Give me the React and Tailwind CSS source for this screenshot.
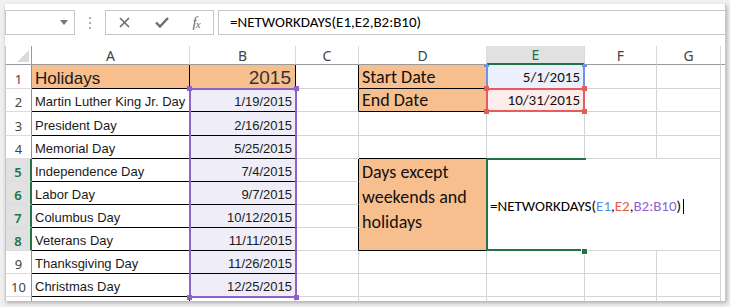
const arial = "font-['Liberation_Sans',Arial,sans-serif]"
const calibri = "font-['Carlito','Lato',sans-serif]"
const segoe = "font-['Segoe_UI','Noto_Sans',sans-serif]"

const holidays = [
  ['Martin Luther King Jr. Day', '1/19/2015'],
  ['President Day', '2/16/2015'],
  ['Memorial Day', '5/25/2015'],
  ['Independence Day', '7/4/2015'],
  ['Labor Day', '9/7/2015'],
  ['Columbus Day', '10/12/2015'],
  ['Veterans Day', '11/11/2015'],
  ['Thanksgiving Day', '11/26/2015'],
  ['Christmas Day', '12/25/2015'],
]

function Cell({ r = 'border-r-[#d4d4d4]', b = 'border-b-[#d4d4d4]', wrap = false, className = '', children }) {
  return (
    <div className={`border-r border-b ${r} ${b} ${wrap ? 'whitespace-normal' : 'whitespace-nowrap'} ${className}`}>
      {children}
    </div>
  )
}

function RowHead({ n, active }) {
  return (
    <div
      className={`flex items-end justify-center pb-px leading-[15px] border-l border-l-[#c6c6c6] border-b border-b-[#dcdcdc] text-[13px] ${segoe} ${
        active
          ? 'border-r-2 border-r-[#217346] bg-[#e1e1e1] text-[#217346] font-semibold'
          : 'border-r border-r-[#8f8f8f] text-[#444]'
      }`}
    >
      {n}
    </div>
  )
}

function ColHead({ label, active }) {
  return (
    <div
      className={`flex items-center justify-center text-[14px] ${segoe} border-r border-r-[#dadada] ${
        active
          ? 'bg-[#e1e1e1] text-[#217346] border-b-2 border-b-[#217346]'
          : 'text-[#444] border-b border-b-[#9b9b9b]'
      }`}
    >
      {label}
    </div>
  )
}

function Corner({ className }) {
  return <div className={`absolute w-[5px] h-[5px] ${className}`} />
}

function Blank({ r, b }) {
  return <Cell r={r} b={b} />
}

function Filler() {
  return <div />
}

export default function App() {
  const body = []

  // row 1
  body.push(
    <RowHead key="h1" n={1} />,
    <Cell key="a1" r="border-r-black" b="border-b-black" className={`bg-[#f8bf8e] flex items-end pl-[3px] leading-[18px] text-[17px] text-[#1a1a1a] ${arial}`}>
      Holidays
    </Cell>,
    <Cell key="b1" r="border-r-black" b="border-b-black" className={`bg-[#f8bf8e] flex items-end justify-end pr-[4px] pb-px leading-[19px] text-[19px] text-[#333] ${arial}`}>
      2015
    </Cell>,
    <Blank key="c1" r="border-r-black" />,
    <Cell key="d1" r="border-r-black" b="border-b-black" className={`bg-[#f8bf8e] flex items-end pl-[3px] pb-px leading-[20px] text-[18px] text-[#111] ${calibri}`}>
      Start Date
    </Cell>,
    <div key="e1" className={`relative bg-[#ebf0fc] border-r border-b border-[#d4d4d4] flex items-end justify-end pr-[4px] pb-[2px] leading-[18px] text-[15px] text-[#111] ${calibri}`}>
      5/1/2015
      <div className="absolute -left-px -top-px -right-px -bottom-px border-x-2 border-[#6b93e8]" />
      <div className="absolute -left-[3px] top-0 w-[5px] h-[2px] bg-[#6b93e8]" />
      <div className="absolute -right-[3px] top-0 w-[5px] h-[2px] bg-[#6b93e8]" />
    </div>,
    <Blank key="f1" />,
    <Blank key="g1" />,
    <Filler key="x1" />
  )

  holidays.forEach(([name], i) => {
    const row = i + 2
    const active = row >= 5 && row <= 8
    body.push(<RowHead key={`h${row}`} n={row} active={active} />)
    body.push(
      <Cell key={`a${row}`} r="border-r-black" b="border-b-black" className={`flex items-end pl-[3px] pb-[2px] leading-[15px] text-[13px] text-[#1a1a1a] ${arial}`}>
        {name}
      </Cell>
    )
    if (row === 2) {
      body.push(
        <div key="bblock" className="row-span-9 grid grid-rows-subgrid relative bg-[#efedf8]">
          {holidays.map(([, d]) => (
            <Cell key={d} r="border-r-black" b="border-b-black" className={`flex items-end justify-end pr-[3px] pb-[2px] leading-[15px] text-[13px] text-[#1a1a1a] ${arial}`}>
              {d}
            </Cell>
          ))}
          <div className="absolute -left-px -top-px -right-px -bottom-px border-2 border-[#8d62c9]" />
          <Corner className="-left-[3px] -top-[3px] bg-[#8d62c9]" />
          <Corner className="-right-[3px] -top-[3px] bg-[#8d62c9]" />
          <Corner className="-left-[3px] -bottom-[3px] bg-[#8d62c9]" />
          <Corner className="-right-[3px] -bottom-[3px] bg-[#8d62c9]" />
        </div>
      )
    }
    const cBlack = row === 2 || active
    body.push(<Blank key={`c${row}`} r={cBlack ? 'border-r-black' : undefined} />)

    if (row === 2) {
      body.push(
        <Cell key="d2" r="border-r-black" b="border-b-black" className={`bg-[#f8bf8e] flex items-end pl-[3px] pb-px leading-[20px] text-[18px] text-[#111] ${calibri}`}>
          End Date
        </Cell>,
        <div key="e2" className={`relative bg-[#fcecec] border-r border-b border-[#d4d4d4] flex items-end justify-end pr-[4px] pb-[2px] leading-[18px] text-[15px] text-[#111] ${calibri}`}>
          10/31/2015
          <div className="absolute -left-px -top-px -right-px -bottom-px border-2 border-[#e35d5d]" />
          <Corner className="-left-[3px] -top-[3px] bg-[#e35d5d]" />
          <Corner className="-right-[3px] -top-[3px] bg-[#e35d5d]" />
          <Corner className="-left-[3px] -bottom-[3px] bg-[#e35d5d]" />
          <Corner className="-right-[3px] -bottom-[3px] bg-[#e35d5d]" />
        </div>,
        <Blank key="f2" />,
        <Blank key="g2" />
      )
    } else if (row === 5) {
      body.push(
        <Cell key="d5" wrap r="border-r-black" b="border-b-black" className={`row-span-4 bg-[#f8bf8e] pl-[3px] pt-[1px] leading-[25px] text-[18px] text-[#111] ${calibri}`}>
          Days except weekends and holidays
        </Cell>,
        <div key="e5" className="col-span-3 row-span-4 relative bg-white border-r border-b border-[#d4d4d4] flex items-center pl-[3px] pt-[3px]">
          <span className={`${calibri} text-[15px] text-black whitespace-nowrap`}>
            =NETWORKDAYS(<span className="text-[#5b8ee6]">E1</span>,<span className="text-[#e8584f]">E2</span>,
            <span className="text-[#9063cd]">B2:B10</span>)
          </span>
          <span className="ml-[2px] w-px h-[15px] bg-black" />
          <div className="absolute -left-px -top-px w-[100px] -bottom-px border-t-2 border-l-2 border-b-2 border-[#217346]" />
          <div className="absolute left-[95px] top-[90px] w-[5px] h-[5px] bg-[#217346] ring-1 ring-white" />
        </div>
      )
    } else if (!active) {
      body.push(
        <Blank key={`d${row}`} b={row === 4 ? 'border-b-black' : undefined} />,
        <Blank key={`e${row}`} />,
        <Blank key={`f${row}`} />,
        <Blank key={`g${row}`} />
      )
    }
    body.push(<Filler key={`x${row}`} />)
  })

  // row 11, only its top edge shows
  body.push(
    <RowHead key="h11" n="" />,
    <Blank key="a11" r="border-r-black" />,
    <Blank key="b11" />,
    <Blank key="c11" />,
    <Blank key="d11" />,
    <Blank key="e11" />,
    <Blank key="f11" />,
    <Blank key="g11" />,
    <Filler key="x11" />
  )

  return (
    <div className="w-[730px] h-[307px] bg-[#f0f0f0] pl-[5px] pt-[4px] overflow-hidden">
      <div className="w-[721px] h-[297px] bg-white border-r border-[#c8c8c8] shadow-[1px_2px_4px_rgba(0,0,0,0.28)] flex flex-col overflow-hidden">
        {/* formula bar */}
        <div className="h-[42px] shrink-0 flex items-start pt-[6px]">
          <div className="w-[70px] h-[25px] border border-[#c6c6c6] flex items-center justify-end pr-[6px]">
            <svg width="8" height="5" viewBox="0 0 8 5">
              <path d="M0 0h8L4 5z" fill="#777" />
            </svg>
          </div>
          <div className="w-[30px] h-[25px] flex flex-col items-center justify-center gap-[3px]">
            <span className="w-[2px] h-[2px] bg-[#b0b0b0]" />
            <span className="w-[2px] h-[2px] bg-[#b0b0b0]" />
            <span className="w-[2px] h-[2px] bg-[#b0b0b0]" />
          </div>
          <div className="w-[109px] h-[25px] border border-[#c6c6c6] flex items-center text-[#6d6d6d]">
            <div className="w-[37px] flex justify-center">
              <svg width="11" height="11" viewBox="0 0 11 11">
                <path d="M1 1l9 9M10 1l-9 9" stroke="#6d6d6d" strokeWidth="1.6" />
              </svg>
            </div>
            <div className="w-[37px] flex justify-center">
              <svg width="14" height="11" viewBox="0 0 14 11">
                <path d="M1 5.5l4 4L13 1" stroke="#6d6d6d" strokeWidth="2.4" fill="none" />
              </svg>
            </div>
            <div className="w-[33px] flex justify-center items-end font-['Liberation_Serif',serif] italic leading-none">
              <span className="text-[15px]">f</span>
              <span className="text-[11px] -ml-px">x</span>
            </div>
          </div>
          <div className="w-[4px]" />
          <div className={`flex-1 h-[25px] border border-r-0 border-[#c6c6c6] flex items-center pl-[11px] text-[15px] text-black ${calibri}`}>
            =NETWORKDAYS(E1,E2,B2:B10)
          </div>
        </div>

        {/* sheet */}
        <div className="grid grid-cols-[27px_158px_106px_63px_128px_98px_72px_64px_1fr] grid-rows-[19px_24px_23px_24px_23px_23px_23px_23px_23px_23px_23px_23px]">
          <div className="relative border-l border-l-[#c6c6c6] border-r border-r-[#9b9b9b] border-b border-b-[#9b9b9b]">
            <svg className="absolute right-[2px] bottom-[2px]" width="12" height="12" viewBox="0 0 12 12">
              <path d="M12 0V12H0z" fill="#dadada" />
            </svg>
          </div>
          {['A', 'B', 'C', 'D', 'E', 'F', 'G'].map(l => (
            <ColHead key={l} label={l} active={l === 'E'} />
          ))}
          <div className="border-b border-b-[#9b9b9b]" />
          {body}
        </div>
      </div>
    </div>
  )
}
